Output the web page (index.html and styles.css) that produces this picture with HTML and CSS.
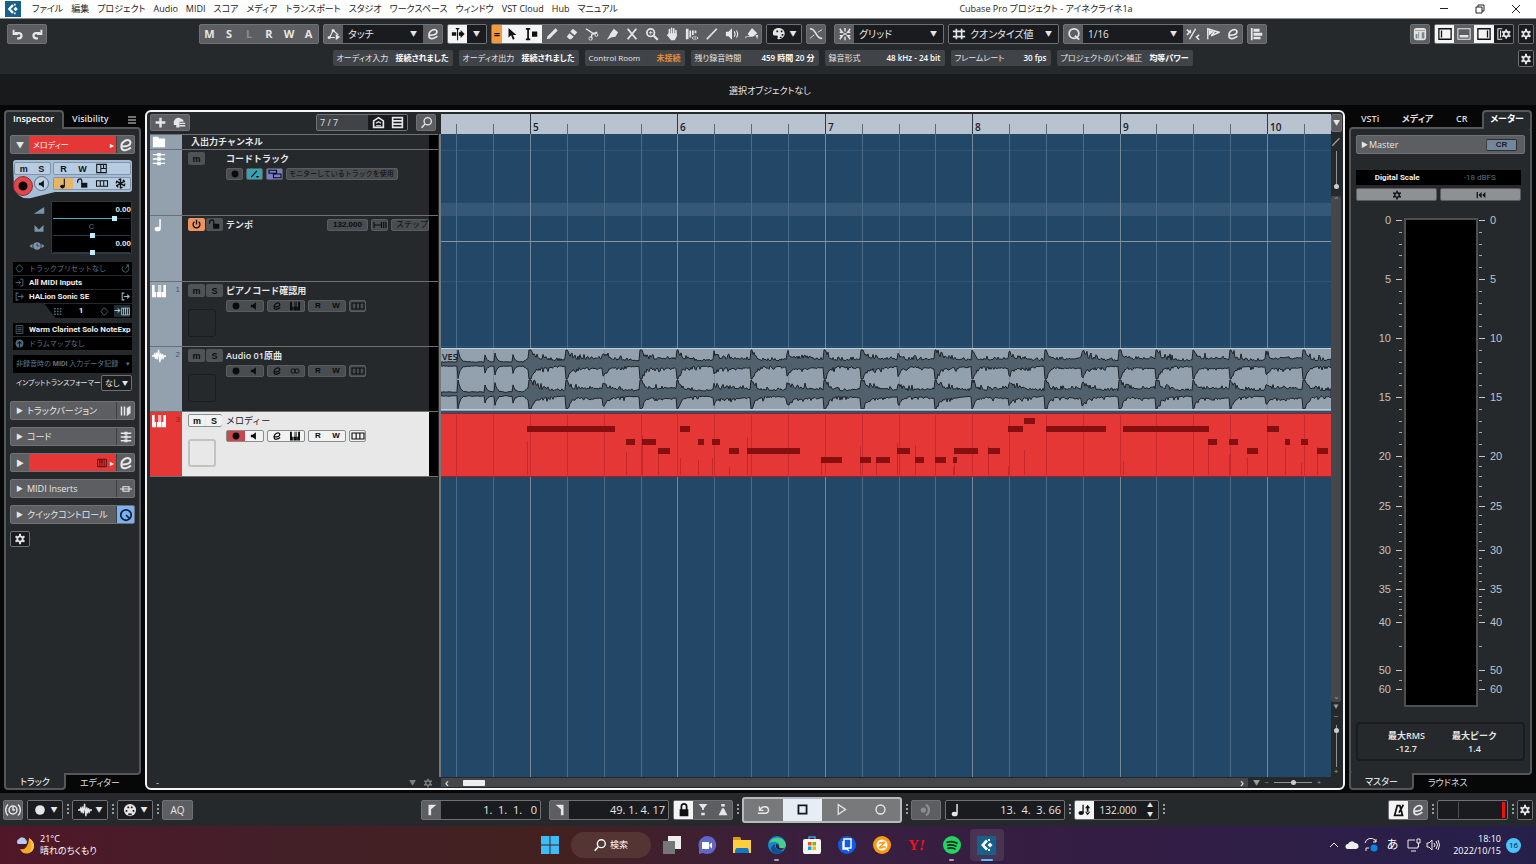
FILE: index.html
```html
<!DOCTYPE html>
<html lang="ja">
<head>
<meta charset="utf-8">
<title>Cubase Pro プロジェクト - アイネクライネ1a</title>
<link rel="stylesheet" href="styles.css">
</head>
<body>
<svg class="sprite" aria-hidden="true">
  <symbol id="undo" viewBox="0 0 16 16"><path d="M3 3v5h5" fill="none" stroke="currentColor" stroke-width="2.200"/><path d="M4 7h5a3 3 0 0 1 0 6H7" fill="none" stroke="currentColor" stroke-width="2.600"/></symbol>
  <symbol id="redo" viewBox="0 0 16 16"><path d="M13 3v5H8" fill="none" stroke="currentColor" stroke-width="2.200"/><path d="M12 7H7a3 3 0 0 0 0 6h2" fill="none" stroke="currentColor" stroke-width="2.600"/></symbol>
  <symbol id="e" viewBox="0 0 16 16"><path d="M4 9.500C8 9.500 12.500 8.500 12.500 5.500 12.500 3 9.500 2.500 7.500 3.500 4.500 5 2.800 8 3.500 11c.8 3.500 6 2.500 9.500-.5" fill="none" stroke="currentColor" stroke-width="2"/></symbol>
  <symbol id="gear" viewBox="0 0 16 16"><circle cx="8" cy="8" r="3.600" fill="none" stroke="currentColor" stroke-width="2.400"/><path d="M8 1v3M8 12v3M2 4.500l2.500 1.500M11.500 10l2.500 1.500M2 11.500L4.500 10M11.500 6L14 4.500" stroke="currentColor" stroke-width="2.600"/></symbol>
  <symbol id="auto" viewBox="0 0 16 16"><path d="M3 12L7 4l6 5M2 12h7" fill="none" stroke="currentColor" stroke-width="1.300"/><path d="M10 8v7l5-3.500z" fill="currentColor"/><circle cx="7" cy="4" r="1.800" fill="currentColor"/><circle cx="2.500" cy="12" r="1.800" fill="currentColor"/></symbol>
  <symbol id="scroll" viewBox="0 0 16 16"><path d="M1 6h5v4H1zM9 6h2V3.500L15.500 8 11 12.500V10H9zM5 1h5L7.500 4z" fill="currentColor"/><path d="M7.500 2v13" stroke="currentColor" stroke-width="1.200"/></symbol>
  <symbol id="arrow" viewBox="0 0 16 16"><path d="M4 1v11l3-2.500 2 5 2-1-2-4.500h4z" fill="currentColor"/></symbol>
  <symbol id="range" viewBox="0 0 16 16"><path d="M1 2h5M1 14h5M3.500 2v12" stroke="currentColor" stroke-width="2"/><path d="M8 5h6v6H8z" fill="currentColor"/></symbol>
  <symbol id="pencil" viewBox="0 0 16 16"><path d="M2 14l1-3.500L12 1.500l2.500 2.500-9 9z" fill="currentColor"/></symbol>
  <symbol id="eraser" viewBox="0 0 16 16"><path d="M9 2l5 4-3 3.500L6 5.500zM5 7l5 4-3 3H5L2 11z" fill="currentColor"/></symbol>
  <symbol id="scissors" viewBox="0 0 16 16"><path d="M1 2l10 6.500M8 8l-1 5" stroke="currentColor" stroke-width="1.600"/><path d="M8 8l6-2" stroke="currentColor" stroke-width="2"/><circle cx="13" cy="9" r="1.700" fill="none" stroke="currentColor"/><circle cx="6.500" cy="13" r="2" fill="none" stroke="currentColor"/></symbol>
  <symbol id="glue" viewBox="0 0 16 16"><path d="M10 2l5 4-3 5-6 1-1-3zM5 10l2 2-5 2.500z" fill="currentColor"/></symbol>
  <symbol id="x" viewBox="0 0 16 16"><path d="M3 2l10 12M13 2L3 14" stroke="currentColor" stroke-width="2.200"/></symbol>
  <symbol id="zoom" viewBox="0 0 16 16"><circle cx="6.500" cy="6.500" r="4.300" fill="none" stroke="currentColor" stroke-width="2"/><path d="M10 10l4.500 4.500" stroke="currentColor" stroke-width="2.600"/><path d="M4.500 6.500h4M6.500 4.500v4" stroke="currentColor"/></symbol>
  <symbol id="hand" viewBox="0 0 16 16"><path d="M5 9V3M7.500 8V1.500M10 8V2M12.500 9V4" stroke="currentColor" stroke-width="1.800" stroke-linecap="round"/><path d="M4 7h9.400v4L11 15H7L2 9l1.500-1z" fill="currentColor"/></symbol>
  <symbol id="comp" viewBox="0 0 16 16"><path d="M1 2h3v12H1zM5 4h2v8H5zM8 4h2v5H8zM11 4h2v3h-2z" fill="currentColor"/><path d="M10 11l-2 1.500 2 1.500M13 11l2 1.500-2 1.500M11.500 10v5" fill="none" stroke="currentColor"/></symbol>
  <symbol id="line" viewBox="0 0 16 16"><path d="M2 14L13.500 2" stroke="currentColor" stroke-width="2"/></symbol>
  <symbol id="autoline" viewBox="0 0 16 16"><path d="M2 13L11 3" stroke="currentColor" stroke-width="2"/><path d="M9 11h6l-3 3.500z" fill="currentColor"/></symbol>
  <symbol id="speaker" viewBox="0 0 16 16"><path d="M1 5.500h3l4-4v13l-4-4H1z" fill="currentColor"/><path d="M10.500 5q2 3 0 6M13 4q3 4 0 8" fill="none" stroke="currentColor" stroke-width="1.300"/></symbol>
  <symbol id="bucket" viewBox="0 0 16 16"><path d="M8 1l6 6-5 4H2L1 13l-1-2 5-1-2-2zM12 9h3l-1 5z" fill="currentColor"/></symbol>
  <symbol id="palette" viewBox="0 0 16 16"><path fill-rule="evenodd" d="M8 1a7 6.500 0 1 1-1 13c-2-1 1-3-1-4s-5 1-5-3 3-6 7-6zm-3 3v2h2V4zm5 0v2h2V4zm1 4v2h2V8zm-2 3v1.500h2V11z" fill="currentColor"/></symbol>
  <symbol id="cross" viewBox="0 0 16 16"><path d="M1 2c8 0 6 11 14 11" fill="none" stroke="currentColor" stroke-width="1.800"/><path d="M1 13l5-4M10 6l5-3" stroke="currentColor"/></symbol>
  <symbol id="snap" viewBox="0 0 16 16"><path d="M8 1v4M8 11v4M6 8h4M2 2l3 4-3 0M14 2l-3 4h3M2 14l3-4H2M14 14l-3-4h3" fill="none" stroke="currentColor" stroke-width="1.600"/></symbol>
  <symbol id="hash" viewBox="0 0 16 16"><path d="M5 2v12M11 2v12M1 5h14M1 11h14" stroke="currentColor" stroke-width="1.900"/></symbol>
  <symbol id="q" viewBox="0 0 16 16"><circle cx="8" cy="7.500" r="5.500" fill="none" stroke="currentColor" stroke-width="2"/><path d="M9 10l5 4.500" stroke="currentColor" stroke-width="2"/></symbol>
  <symbol id="swing" viewBox="0 0 16 16"><path d="M4 14l7-12M1 3l3 3-3 3M15 9l-3 2.500 3 3M5 3v4" fill="none" stroke="currentColor" stroke-width="1.700"/></symbol>
  <symbol id="flag" viewBox="0 0 16 16"><path d="M2 14V2l13 4-9 4 4-5" fill="none" stroke="currentColor" stroke-width="1.600"/><path d="M3 3l6 2-6 5z" fill="currentColor"/></symbol>
  <symbol id="align" viewBox="0 0 16 16"><path d="M1 1h2v14H1zM4 2h7v3.500H4zM4 6.500h10V10H4zM4 11h8v3H4z" fill="currentColor"/></symbol>
  <symbol id="mixer" viewBox="0 0 16 16"><rect x="1" y="1" width="14" height="14" rx="3" fill="#e4e2df"/><path d="M3 8h2v5H3zM6 6h1v7H6zM10 6h3v7h-3z" fill="#788797"/><path d="M2 4h12" stroke="#9d9b94"/></symbol>
  <symbol id="winleft" viewBox="0 0 16 16"><path d="M1 2h14v12H1zM4 4v8" fill="none" stroke="currentColor" stroke-width="1.500"/></symbol>
  <symbol id="winlow" viewBox="0 0 16 16"><path d="M1 2h14v12H1z" fill="none" stroke="currentColor" stroke-width="1.200"/><path d="M3 9h10v3H3z" fill="currentColor"/></symbol>
  <symbol id="winright" viewBox="0 0 16 16"><path d="M1 2h14v12H1zM12 4v8" fill="none" stroke="currentColor" stroke-width="1.500"/></symbol>
  <symbol id="wingear" viewBox="0 0 16 16"><path d="M6 2H1v12h5M4 4v8" fill="none" stroke="currentColor" stroke-width="1.200"/><circle cx="10.500" cy="8" r="2.800" fill="none" stroke="currentColor" stroke-width="2.200"/><path d="M10.500 2.500v11M5.700 5.200l9.600 5.600M5.700 10.800l9.600-5.600" stroke="currentColor" stroke-width="1.800"/><circle cx="10.500" cy="8" r="1.800" fill="#191b1e"/></symbol>
  <symbol id="keys" viewBox="0 0 16 16"><path d="M0 1h3v8h1.500v6H0zM5.500 1h1v8H11V9H9.500V1h1v8H11v6H5.500V9H6.500V1zM13 1h3v14h-4.500V9H13z" fill="currentColor"/><path d="M7.300 1h1.400v9H7.300z" fill="currentColor"/></symbol>
  <symbol id="keysbox" viewBox="0 0 16 16"><path d="M1 2h14v12H1zM4.500 2v12M8 2v12M11.500 2v12M4.500 2v6M8 2v6" fill="none" stroke="currentColor" stroke-width="1.500"/></symbol>
  <symbol id="lanes" viewBox="0 0 18 16"><path d="M1 4h16v8H1zM6.500 4v8M11.500 4v8" fill="none" stroke="currentColor" stroke-width="1.500"/></symbol>
  <symbol id="wave" viewBox="0 0 16 16"><path d="M0 8h2l1-2 1 5 1-7 1 8L7.500 1 9 15l1-10 1 7 1-6 1 4 1-2h2" fill="none" stroke="currentColor" stroke-width="1.500"/></symbol>
  <symbol id="chord" viewBox="0 0 16 16"><path d="M1 3h14M1 8h14M1 13h14" stroke="currentColor" stroke-width="1.700"/><path d="M6 1h4v4H6zM6 6h4v4H6zM6 11h4v4H6z" fill="currentColor"/></symbol>
  <symbol id="note" viewBox="0 0 16 16"><ellipse cx="6.500" cy="12.500" rx="3.400" ry="2.600" fill="currentColor"/><path d="M9.200 1v11" stroke="currentColor" stroke-width="1.700"/></symbol>
  <symbol id="folder" viewBox="0 0 16 16"><path d="M1 2h6l1 2h7v10H1z" fill="currentColor"/></symbol>
  <symbol id="lock" viewBox="0 0 16 16"><path d="M3 7h10v8H3z" fill="currentColor"/><path d="M5 8V4a3 3 0 0 1 6 0v4" fill="none" stroke="currentColor" stroke-width="2"/></symbol>
  <symbol id="unlock" viewBox="0 0 16 16"><path d="M6 7h9v7H6z" fill="currentColor"/><path d="M1 7V5a3 3 0 0 1 6-1v4" fill="none" stroke="currentColor" stroke-width="1.800"/></symbol>
  <symbol id="power" viewBox="0 0 16 16"><path d="M5 4a5 5 0 1 0 6 0M8 1v7" fill="none" stroke="currentColor" stroke-width="1.900"/></symbol>
  <symbol id="dot" viewBox="0 0 16 16"><circle cx="8" cy="8" r="5.500" fill="currentColor"/></symbol>
  <symbol id="mon" viewBox="0 0 16 16"><path d="M3 6h3l5-4v12l-5-4H3z" fill="currentColor"/></symbol>
  <symbol id="stereo" viewBox="0 0 16 16"><circle cx="5" cy="8" r="3.500" fill="none" stroke="currentColor" stroke-width="1.500"/><circle cx="11" cy="8" r="3.500" fill="none" stroke="currentColor" stroke-width="1.500"/></symbol>
  <symbol id="lane-grid" viewBox="0 0 16 16"><path d="M1 2h14v12H1zM7 2v12M7 8h8M11 2v6" fill="none" stroke="currentColor" stroke-width="1.500"/></symbol>
  <symbol id="flake" viewBox="0 0 16 16"><path d="M8 1v14M2 4.500l12 7M2 11.500l12-7" stroke="currentColor" stroke-width="2"/><circle cx="8" cy="8" r="6.300" fill="none" stroke="currentColor" stroke-width="1.800" stroke-dasharray="4 2.500"/></symbol>
  <symbol id="diamond" viewBox="0 0 16 16"><path d="M6 2L2 8l4 6M9 2l5 6-5 6M6 2h3M6 14h3" fill="none" stroke="currentColor" stroke-width="1.500"/></symbol>
  <symbol id="reload" viewBox="0 0 16 16"><path d="M4 4a6 6 0 1 0 8 0M8 8l4-5" fill="none" stroke="currentColor" stroke-width="1.600"/><path d="M9 1h5v5z" fill="currentColor"/></symbol>
  <symbol id="in" viewBox="0 0 16 16"><path d="M1 8h8M6 4.500L9.500 8 6 11.500M9 2h5v12H9" fill="none" stroke="currentColor" stroke-width="1.600"/></symbol>
  <symbol id="out" viewBox="0 0 16 16"><path d="M6 2H2v12h4M5 8h9M11 4.500L14.500 8 11 11.500" fill="none" stroke="currentColor" stroke-width="1.800"/></symbol>
  <symbol id="dots9" viewBox="0 0 16 16"><path d="M2 3h3M7 3h3M12 3h3M2 8h3M7 8h3M12 8h3M2 13h3M7 13h3M12 13h3" stroke="currentColor" stroke-width="2.500"/></symbol>
  <symbol id="page" viewBox="0 0 16 16"><path d="M2 1h12v14H2zM4 5h8M4 8h8M4 11h8" fill="none" stroke="currentColor" stroke-width="1.500"/></symbol>
  <symbol id="drum" viewBox="0 0 16 16"><circle cx="8" cy="8" r="7" fill="currentColor"/><path d="M5 9q0-4 3-4t3 4M8 5v9" fill="none" stroke="#000" stroke-width="1.500"/></symbol>
  <symbol id="vol" viewBox="0 0 16 16"><path d="M1 13L15 4v9z" fill="currentColor"/></symbol>
  <symbol id="pan" viewBox="0 0 16 16"><path d="M2 4l6 6 6-6v9H2z" fill="currentColor"/></symbol>
  <symbol id="delay" viewBox="0 0 20 16"><path d="M4 5v6L0 8zM16 5v6l4-3z" fill="currentColor"/><circle cx="10" cy="8" r="5" fill="currentColor"/><path d="M10 5v3h3" stroke="#25292c" fill="none"/></symbol>
  <symbol id="versions" viewBox="0 0 16 16"><path d="M1 2h2v12H1zM5 2h2v12H5zM9 4l5-3v10l-5 4z" fill="currentColor"/></symbol>
  <symbol id="insert" viewBox="0 0 16 16"><path d="M0 8h16M4 5h8v6H4z" fill="none" stroke="currentColor" stroke-width="1.600"/></symbol>
  <symbol id="knob" viewBox="0 0 16 16"><circle cx="8" cy="8" r="6" fill="none" stroke="currentColor" stroke-width="2"/><path d="M8 8l4 4" stroke="currentColor" stroke-width="2"/></symbol>
  <symbol id="plus" viewBox="0 0 16 16"><path d="M8 2v12M2 8h12" stroke="currentColor" stroke-width="3"/></symbol>
  <symbol id="preset" viewBox="0 0 16 16"><path d="M2 5a5 4 0 0 1 9-1q2 0 2 3H8v7H4V11H1V6z" fill="currentColor"/><path d="M8 9h7M8 12h7" stroke="currentColor" stroke-width="1.600"/></symbol>
  <symbol id="house" viewBox="0 0 16 16"><path d="M2 6l6-4 6 4v8H2z" fill="none" stroke="currentColor" stroke-width="2"/><path d="M5 9l3-2 3 2M5 12h6" fill="none" stroke="currentColor" stroke-width="1.500"/></symbol>
  <symbol id="list" viewBox="0 0 16 16"><path d="M2 2h12v12H2zM2 6h12M2 10h12" fill="none" stroke="currentColor" stroke-width="2"/></symbol>
  <symbol id="search" viewBox="0 0 16 16"><circle cx="9.500" cy="6.500" r="4.500" fill="none" stroke="currentColor" stroke-width="1.600"/><path d="M6 10l-4 4.500" stroke="currentColor" stroke-width="1.800"/></symbol>
  <symbol id="rewind" viewBox="0 0 16 16"><path d="M1 3h2v10H1zM9 3v10L4 8zM15 3v10l-5-5z" fill="currentColor"/></symbol>
  <symbol id="loc-l" viewBox="0 0 16 16"><path d="M4 2h9L7 7v7H4z" fill="currentColor"/></symbol>
  <symbol id="loc-r" viewBox="0 0 16 16"><path d="M12 2H3l6 5v7h3z" fill="currentColor"/></symbol>
  <symbol id="punchin" viewBox="0 0 16 16"><path d="M3 1h10L9 6v2H7V6zM6 11h4v3H6z" fill="currentColor"/></symbol>
  <symbol id="punchout" viewBox="0 0 16 16"><path d="M6 1h4v3H6zM7 6h2l4 8H3z" fill="currentColor"/></symbol>
  <symbol id="cycle" viewBox="0 0 16 16"><path d="M1 12.500h9c6 0 5-8 0-8-3 0-5 1-6.500 4" fill="none" stroke="currentColor" stroke-width="1.800"/><path d="M3 4v5h5" fill="none" stroke="currentColor" stroke-width="1.600"/></symbol>
  <symbol id="stop" viewBox="0 0 16 16"><path d="M3 3h10v10H3z" fill="none" stroke="currentColor" stroke-width="2.200"/></symbol>
  <symbol id="play" viewBox="0 0 16 16"><path d="M4 2l9 6-9 6z" fill="none" stroke="currentColor" stroke-width="1.600"/></symbol>
  <symbol id="rec" viewBox="0 0 16 16"><circle cx="8" cy="8" r="5.500" fill="none" stroke="currentColor" stroke-width="1.700"/></symbol>
  <symbol id="clock" viewBox="0 0 16 16"><circle cx="8" cy="8" r="4" fill="none" stroke="currentColor" stroke-width="1.500"/><path d="M8 5v3h2M3 2.500a7.500 7.500 0 0 0 0 11M13 2.500a7.500 7.500 0 0 1 0 11" fill="none" stroke="currentColor" stroke-width="1.400"/></symbol>
  <symbol id="midi" viewBox="0 0 16 16"><circle cx="8" cy="8" r="7" fill="currentColor"/><path d="M3 9h2M5 5h2M9 5h2M11 9h2M6 13h4" stroke="#191b1e" stroke-width="2"/></symbol>
  <symbol id="sound" viewBox="0 0 16 16"><circle cx="5" cy="8" r="3" fill="currentColor"/><path d="M8 2a7 7 0 0 1 0 12" fill="none" stroke="currentColor" stroke-width="2.500"/></symbol>
  <symbol id="metro" viewBox="0 0 16 16"><path d="M6 3h3l3 11H3zM8 11l5-9" fill="none" stroke="currentColor" stroke-width="2"/></symbol>
  <symbol id="tempo" viewBox="0 0 16 16"><ellipse cx="3.500" cy="11.500" rx="3" ry="2.300" fill="currentColor"/><path d="M5.800 2v10" stroke="currentColor" stroke-width="1.500"/><path d="M8 6l3-4 3 4zM8 10l3 4 3-4zM10 5h2v6h-2z" fill="currentColor"/></symbol>
  <symbol id="cubase" viewBox="0 0 16 16"><path d="M7 2.500l2 2L5.500 8 9 11.500l-2 2L2 8zM11 5.500L13.500 8 11 10.500 8.500 8zM9 2h2v2H9zM9 12h2v2H9z" fill="#fff"/></symbol>
</svg>

<header class="menubar">
  <span class="logo"><svg class="i14"><use href="#cubase"/></svg></span>
  <nav class="menus">
    <button>ファイル</button><button>編集</button><button>プロジェクト</button><button>Audio</button><button>MIDI</button><button>スコア</button><button>メディア</button><button>トランスポート</button><button>スタジオ</button><button>ワークスペース</button><button>ウィンドウ</button><button>VST Cloud</button><button>Hub</button><button>マニュアル</button>
  </nav>
  <h1 class="title">Cubase Pro プロジェクト - アイネクライネ1a</h1>
  <div class="winbtns">
    <button aria-label="最小化"><svg viewBox="0 0 12 12"><path d="M2 5.500h8"/></svg></button>
    <button aria-label="元に戻す"><svg viewBox="0 0 12 12"><path d="M2 4h6v6H2zM4 4V2h6v6H8"/></svg></button>
    <button aria-label="閉じる"><svg viewBox="0 0 12 12"><path d="M2 2l8 8M10 2l-8 8"/></svg></button>
  </div>
</header>

<section class="topbar">
  <div class="tools">
    <div class="grp"><button aria-label="元に戻す"><svg><use href="#undo"/></svg></button><button aria-label="やり直し"><svg><use href="#redo"/></svg></button></div>
    <div class="tools-mid">
      <div class="grp letters"><button>M</button><button>S</button><button class="dim">L</button><button>R</button><button>W</button><button>A</button></div>
      <div class="grp"><button aria-label="オートメーション"><svg><use href="#auto"/></svg></button><span class="sel w80"><select aria-label="モード"><option>タッチ</option></select></span><button aria-label="設定"><svg><use href="#e"/></svg></button></div>
      <div class="grp"><button class="on" aria-label="オートスクロール"><svg><use href="#scroll"/></svg></button><button class="dark">▼</button></div>
      <div class="grp palette"><button class="grip" aria-label="ツール">=</button><button class="on" aria-label="選択"><svg><use href="#arrow"/></svg></button><button class="on" aria-label="範囲"><svg><use href="#range"/></svg></button><button aria-label="鉛筆"><svg><use href="#pencil"/></svg></button><button aria-label="消しゴム"><svg><use href="#eraser"/></svg></button><button aria-label="はさみ"><svg><use href="#scissors"/></svg></button><button aria-label="のり"><svg><use href="#glue"/></svg></button><button aria-label="ミュート"><svg><use href="#x"/></svg></button><button aria-label="ズーム"><svg><use href="#zoom"/></svg></button><button aria-label="手"><svg><use href="#hand"/></svg></button><button aria-label="コンプ"><svg><use href="#comp"/></svg></button><button aria-label="ライン"><svg><use href="#line"/></svg></button><button aria-label="再生"><svg><use href="#speaker"/></svg></button><button aria-label="カラー"><svg><use href="#bucket"/></svg></button></div>
      <div class="grp w36"><button class="dark" aria-label="パレット"><svg><use href="#palette"/></svg>▼</button></div>
      <div class="grp"><button aria-label="クロスフェード"><svg><use href="#cross"/></svg></button></div>
      <div class="grp gap-l"><button aria-label="スナップ"><svg><use href="#snap"/></svg></button><span class="sel w88"><select aria-label="スナップタイプ"><option>グリッド</option></select></span></div>
      <div class="grp hashed"><span class="pre"><svg><use href="#hash"/></svg></span><span class="sel w88"><select aria-label="グリッドタイプ"><option>クオンタイズ値</option></select></span></div>
      <div class="grp"><button aria-label="クオンタイズ"><svg><use href="#q"/></svg></button><span class="sel w100"><select aria-label="プリセット"><option>1/16</option></select></span><button aria-label="スウィング"><svg><use href="#swing"/></svg></button><button aria-label="フラグ"><svg><use href="#flag"/></svg></button><button aria-label="クオンタイズ設定"><svg><use href="#e"/></svg></button></div>
      <div class="grp"><button aria-label="整列"><svg><use href="#align"/></svg></button></div>
    </div>
    <div class="tools-end">
      <div class="grp"><button aria-label="ミキサー"><svg><use href="#mixer"/></svg></button></div>
      <div class="grp"><button class="on" aria-label="左ゾーン"><svg><use href="#winleft"/></svg></button><button aria-label="下ゾーン"><svg><use href="#winlow"/></svg></button><button class="on" aria-label="右ゾーン"><svg><use href="#winright"/></svg></button><button class="dark" aria-label="ゾーン設定"><svg><use href="#wingear"/></svg></button></div>
      <div class="grp slim"><button class="dark" aria-label="設定"><svg><use href="#gear"/></svg></button></div>
    </div>
  </div>
  <div class="status">
    <div class="chips">
      <div class="chip c120"><span>オーディオ入力</span><b>接続されました</b></div>
      <div class="chip c120"><span>オーディオ出力</span><b>接続されました</b></div>
      <div class="chip c100"><span>Control Room</span><b class="warn">未接続</b></div>
      <div class="chip c128"><span>残り録音時間</span><b>459 時間 20 分</b></div>
      <div class="chip c120"><span>録音形式</span><b>48 kHz - 24 bit</b></div>
      <div class="chip c100"><span>フレームレート</span><b>30 fps</b></div>
      <div class="chip c136"><span>プロジェクトのパン補正</span><b>均等パワー</b></div>
    </div>
    <div class="grp slim"><button class="dark" aria-label="設定"><svg><use href="#gear"/></svg></button></div>
  </div>
</section>
<div class="infoline">選択オブジェクトなし</div>

<main class="zones">
  <aside class="panel inspector">
    <div class="tabs"><button class="tab active">Inspector</button><button class="tab">Visibility</button><button class="tab end" aria-label="メニュー"><svg class="i10" viewBox="0 0 10 10"><path d="M1 2h8M1 5h8M1 8h8" stroke="currentColor"/></svg></button></div>
    <div class="panel-body">
      <div class="bar melody"><button class="tri">▼</button><span class="name red">メロディー<i>▸</i></span><button aria-label="編集"><svg class="i16"><use href="#e"/></svg></button></div>
      <div class="strip">
        <svg class="strip-bg" viewBox="0 0 119 40" preserveAspectRatio="none"><path d="M3 0H116q3 0 3 3V29q0 3-3 3H42L18 38Q4 40 1 27L0 3Q0 0 3 0z" fill="#a6bdd6"/></svg>
        <div class="cell ms"><button>m</button><button>S</button></div>
        <div class="cell rw"><button>R</button><button>W</button><button aria-label="レーン"><svg><use href="#lane-grid"/></svg></button><button aria-hidden="true" tabindex="-1"></button></div>
        <div class="rounds"><button class="recbtn" aria-label="録音"></button><button class="monbtn" aria-label="モニター"><svg><use href="#mon"/></svg></button></div>
        <div class="cell four"><button class="amber" aria-label="タイムベース"><svg><use href="#note"/></svg></button><button aria-label="ロック"><svg><use href="#unlock"/></svg></button><button aria-label="レーン表示"><svg class="wide"><use href="#lanes"/></svg></button><button aria-label="フリーズ"><svg><use href="#flake"/></svg></button></div>
      </div>
      <div class="levels">
        <div class="lv-icons"><svg><use href="#vol"/></svg><svg><use href="#pan"/></svg><svg class="wide"><use href="#delay"/></svg></div>
        <div class="lv-box">
          <div class="lv"><b>0.00</b><span class="rail full"><i></i></span></div>
          <div class="lv mid"><b>C</b><span class="rail"><i></i></span></div>
          <div class="lv"><b>0.00</b><span class="rail"><i></i></span></div>
        </div>
      </div>
      <div class="rows">
        <div class="row dimrow"><svg><use href="#diamond"/></svg><span>トラックプリセットなし</span><svg><use href="#reload"/></svg></div>
        <div class="row"><svg><use href="#in"/></svg><b>All MIDI Inputs</b></div>
        <div class="row"><svg><use href="#out"/></svg><b>HALion Sonic SE</b><svg class="lit"><use href="#out"/></svg></div>
        <div class="row notch"><svg><use href="#dots9"/></svg><b>1</b><svg><use href="#diamond"/></svg><span class="keybtn">➔<svg><use href="#keysbox"/></svg></span></div>
      </div>
      <div class="rows">
        <div class="row"><svg><use href="#page"/></svg><b class="prog">Warm Clarinet Solo NoteExp</b></div>
        <div class="row dimrow"><svg><use href="#drum"/></svg><span>ドラムマップなし</span></div>
      </div>
      <div class="retro"><span>非録音時の <b>MIDI</b> 入力データ記録</span><i>▾</i></div>
      <label class="transformer">インプットトランスフォーマー<span class="sel small"><select><option>なし</option></select></span></label>
      <div class="sections">
        <div class="bar"><button class="sec"><i>▶</i>トラックバージョン</button><button aria-label="バージョン"><svg><use href="#versions"/></svg></button></div>
        <div class="bar"><button class="sec"><i>▶</i>コード</button><button aria-label="コード"><svg><use href="#chord"/></svg></button></div>
        <div class="bar"><button class="tri">▶</button><span class="name red right"><svg><use href="#keysbox"/></svg><i>▸</i></span><button aria-label="編集"><svg class="i16"><use href="#e"/></svg></button></div>
        <div class="bar"><button class="sec"><i>▶</i>MIDI Inserts</button><button aria-label="インサート"><svg><use href="#insert"/></svg></button></div>
        <div class="bar"><button class="sec"><i>▶</i>クイックコントロール</button><button class="blue" aria-label="クイックコントロール"><svg class="i14"><use href="#knob"/></svg></button></div>
      </div>
      <button class="gearbtn" aria-label="設定"><svg><use href="#gear"/></svg></button>
    </div>
    <div class="tabs foot"><button class="tab active">トラック</button><button class="tab">エディター</button></div>
  </aside>

  <section class="project">
    <div class="list-head">
      <div class="grp low"><button aria-label="追加"><svg><use href="#plus"/></svg></button><button aria-label="プリセットから追加"><svg><use href="#preset"/></svg></button></div>
      <div class="grp low count"><span>7 / 7</span><button class="dark" aria-label="表示"><svg><use href="#house"/></svg></button><button class="dark" aria-label="一覧"><svg><use href="#list"/></svg></button></div>
      <div class="grp low"><button aria-label="検索"><svg><use href="#search"/></svg></button></div>
    </div>
    <svg class="ruler" id="ruler" role="img" aria-label="ルーラー"></svg>
    <button class="ruler-menu">▼</button>

    <div class="tracks">
      <article class="track folder"><div class="tcol"><svg class="i14"><use href="#folder"/></svg></div><div class="tmain"><h2>入出力チャンネル</h2></div><div class="tmeter"></div></article>
      <article class="track tall"><div class="tcol"><svg class="i14"><use href="#chord"/></svg></div>
        <div class="tmain"><div class="pair"><button>m</button></div><div class="tinfo"><h2>コードトラック</h2><div class="ctl"><span class="pill"><button aria-label="録音"><svg><use href="#dot"/></svg></button></span><span class="pill teal"><button aria-label="自動"><svg><use href="#autoline"/></svg></button></span><span class="pill violet"><button aria-label="ボイシング"><svg class="wide" viewBox="0 0 18 16"><path d="M1 3h10v4H1zM7 8h10v5H7z" fill="none" stroke="currentColor" stroke-width="1.500"/></svg></button></span><span class="pill txt">モニターしているトラックを使用</span></div></div></div><div class="tmeter"></div></article>
      <article class="track tall"><div class="tcol"><svg class="i14"><use href="#note"/></svg></div>
        <div class="tmain"><div class="pair"><button class="peach" aria-label="有効"><svg><use href="#power"/></svg></button><button aria-label="ロック"><svg><use href="#unlock"/></svg></button></div><div class="tinfo"><h2>テンポ</h2></div><div class="tempo"><span class="pill val">132.000</span><span class="pill"><button aria-label="トラック幅"><svg class="wide" viewBox="0 0 18 16"><path d="M1 4v8M1 8h10M11 4v8M14 4v8M17 4v8" stroke="currentColor" stroke-width="1.500"/></svg></button></span><span class="pill step">ステップ</span></div></div><div class="tmeter"></div></article>
      <article class="track"><div class="tcol"><svg class="i14"><use href="#keys"/></svg><span>1</span></div>
        <div class="tmain"><div class="side"><div class="pair"><button>m</button><button>S</button></div><div class="thumb"></div></div><div class="tinfo"><h2>ピアノコード確認用</h2><div class="ctl"><span class="pill"><button aria-label="録音"><svg><use href="#dot"/></svg></button><button aria-label="モニター"><svg><use href="#mon"/></svg></button></span><span class="pill"><button aria-label="編集"><svg><use href="#e"/></svg></button><button aria-label="音源"><svg><use href="#keys"/></svg></button></span><span class="pill"><button>R</button><button>W</button></span><span class="pill"><button aria-label="レーン"><svg class="wide"><use href="#lanes"/></svg></button></span></div></div></div><div class="tmeter"></div></article>
      <article class="track"><div class="tcol"><svg class="i14"><use href="#wave"/></svg><span>2</span></div>
        <div class="tmain"><div class="side"><div class="pair"><button>m</button><button>S</button></div><div class="thumb"></div></div><div class="tinfo"><h2>Audio 01原曲</h2><div class="ctl"><span class="pill"><button aria-label="録音"><svg><use href="#dot"/></svg></button><button aria-label="モニター"><svg><use href="#mon"/></svg></button></span><span class="pill"><button aria-label="編集"><svg><use href="#e"/></svg></button><button aria-label="ステレオ"><svg><use href="#stereo"/></svg></button></span><span class="pill"><button>R</button><button>W</button></span><span class="pill"><button aria-label="レーン"><svg class="wide"><use href="#lanes"/></svg></button></span></div></div></div><div class="tmeter"></div></article>
      <article class="track selected"><div class="tcol"><svg class="i14"><use href="#keys"/></svg><span>3</span></div>
        <div class="tmain"><div class="side"><div class="pair"><button>m</button><button>S</button></div><div class="thumb"></div></div><div class="tinfo"><h2>メロディー</h2><div class="ctl"><span class="pill"><button class="armed" aria-label="録音"><svg><use href="#dot"/></svg></button><button aria-label="モニター"><svg><use href="#mon"/></svg></button></span><span class="pill"><button aria-label="編集"><svg><use href="#e"/></svg></button><button aria-label="音源"><svg><use href="#keys"/></svg></button></span><span class="pill"><button>R</button><button>W</button></span><span class="pill"><button aria-label="レーン"><svg class="wide"><use href="#lanes"/></svg></button></span></div></div></div><div class="tmeter"></div></article>
    </div>
    <div class="canvas"><svg id="arrange" role="img" aria-label="イベントディスプレイ"></svg></div>
    <div class="vside">
      <svg class="i10"><use href="#line"/></svg>
      <div class="vslider"><i></i></div>
      <div class="vscroll"><span>⌃</span><span>⌄</span></div>
      <span class="vsign">▼</span><span class="vsign">−</span>
      <div class="vslider short"><i></i></div><span class="vsign">+</span>
    </div>

    <div class="list-foot"><span>-</span><span class="grow"></span><span>▼</span><svg class="i10"><use href="#gear"/></svg></div>
    <div class="hscroll"><div class="track-h"><span>‹</span><i></i><span class="r">›</span></div><span>▼</span><span>−</span><div class="hslider"><i></i></div><span>+</span></div>
    <div></div>
  </section>

  <aside class="panel rack">
    <div class="tabs"><button class="tab">VSTi</button><button class="tab">メディア</button><button class="tab">CR</button><button class="tab active">メーター</button></div>
    <div class="panel-body">
      <div class="bar master"><button class="sec"><i>▶</i>Master</button><button class="crbtn">CR</button></div>
      <div class="scale-row"><b>Digital Scale</b><span>-18 dBFS</span></div>
      <div class="two"><button aria-label="設定"><svg><use href="#gear"/></svg></button><button aria-label="リセット"><svg><use href="#rewind"/></svg></button></div>
      <svg class="meter" id="meter" viewBox="0 0 170 500" role="img" aria-label="レベルメーター"></svg>
      <div class="peaks"><div><b>最大RMS</b><b>-12.7</b></div><div><b>最大ピーク</b><b>1.4</b></div></div>
    </div>
    <div class="tabs foot"><button class="tab active">マスター</button><button class="tab">ラウドネス</button></div>
  </aside>
</main>

<footer class="transport">
  <div class="tgroup">
    <div class="grp"><button aria-label="オーディオ性能"><svg class="i16"><use href="#clock"/></svg></button></div>
    <div class="grp w36 sp4"><button class="dark" aria-label="録音モード"><svg><use href="#dot"/></svg>▼</button></div><span class="dots"></span>
    <div class="grp w36"><button class="dark" aria-label="オーディオ録音"><svg><use href="#wave"/></svg>▼</button></div><span class="dots"></span>
    <div class="grp w36"><button class="dark" aria-label="MIDI録音"><svg><use href="#midi"/></svg>▼</button></div><span class="dots"></span>
    <div class="grp aq"><button>AQ</button></div>
  </div>
  <div class="tgroup center">
    <div class="grp loc"><button aria-label="左ロケーター"><svg><use href="#loc-l"/></svg></button><output>1.  1.  1.   0</output></div>
    <div class="grp loc sp8"><button aria-label="右ロケーター"><svg><use href="#loc-r"/></svg></button><output>49. 1. 4. 17</output></div>
    <div class="grp sp4"><button class="on" aria-label="ロック"><svg><use href="#lock"/></svg></button><button aria-label="パンチイン"><svg><use href="#punchin"/></svg></button><button aria-label="パンチアウト"><svg><use href="#punchout"/></svg></button></div><span class="dots"></span>
    <div class="play"><button aria-label="サイクル"><svg><use href="#cycle"/></svg></button><button class="on" aria-label="停止"><svg><use href="#stop"/></svg></button><button aria-label="再生"><svg><use href="#play"/></svg></button><button aria-label="録音"><svg><use href="#rec"/></svg></button></div><span class="dots"></span>
    <div class="grp off"><button aria-label="モニター"><svg><use href="#sound"/></svg></button></div>
    <div class="grp loc sp4"><span class="pre"><svg><use href="#note"/></svg></span><output>13.  4.  3. 66</output></div><span class="dots"></span>
    <div class="grp bpm"><button class="on" aria-label="テンポ"><svg><use href="#tempo"/></svg></button><output>132.000</output><span class="updown">▲<br>▼</span></div><span class="dots"></span>
  </div>
  <div class="tgroup">
    <div class="grp"><button class="on" aria-label="メトロノーム"><svg><use href="#metro"/></svg></button><button aria-label="メトロノーム設定"><svg><use href="#e"/></svg></button></div><span class="dots"></span>
    <div class="grp activity"><i></i><i class="clip"></i></div><span class="dots"></span>
    <div class="grp slim"><button class="dark" aria-label="設定"><svg><use href="#gear"/></svg></button></div>
  </div>
</footer>

<footer class="taskbar">
  <div class="weather">
    <svg viewBox="0 0 20 20"><path d="M14 3q5 3 5 8t-5 7q-6 2-9-4 8 2 9-11z" fill="#f5a623"/><path d="M14 3q5 3 5 8t-5 7q5-7 0-15z" fill="#f7c948"/><path d="M3 9a3 3 0 0 1 1-5 4 4 0 0 1 7 1 2.500 2.500 0 0 1 0 4z" fill="#b4cdf5"/></svg>
    <div>21°C<br>晴れのちくもり</div>
  </div>
  <div class="apps">
    <button aria-label="スタート"><svg viewBox="0 0 20 20"><path d="M1 1h8.500v8.500H1zM10.500 1H19v8.500h-8.500zM1 10.500h8.500V19H1zM10.500 10.500H19V19h-8.500z" fill="#3cbdf7"/></svg></button>
    <button class="pillsearch"><svg class="i14"><use href="#search"/></svg>検索</button>
    <button aria-label="タスクビュー"><svg viewBox="0 0 20 20"><path d="M6 1h13v13H6z" fill="#eee"/><path d="M1 6h12v13H1z" fill="#777"/></svg></button>
    <button aria-label="チャット"><svg viewBox="0 0 20 20"><path d="M10 1a9 9 0 1 1-4 17l-4 1V13A9 9 0 0 1 10 1z" fill="#6264c7"/><path d="M5 7h7v7H5zM12.500 9.500L15 7.500v6l-2.500-2z" fill="#fff"/></svg></button>
    <button aria-label="エクスプローラー"><svg viewBox="0 0 20 20"><path d="M1 2h7l1 3h10v13H1z" fill="#ffcf3f"/><path d="M1 2h7l1 3H1z" fill="#d99a12"/><path d="M5 13h10q2 0 2 5H3q0-5 2-5z" fill="#1479c4"/></svg></button>
    <button class="run" aria-label="Edge"><svg viewBox="0 0 20 20"><circle cx="10" cy="10" r="9" fill="#1687c9"/><path d="M2 8a9 9 0 0 1 17 2c0 4-6 4-7 2 2-4-4-7-10-4z" fill="#47cf8b"/><path d="M8 9q-2 6 9 7-6 5-12 1-3-5 3-8z" fill="#0c4f9c"/><path d="M9 9q3 0 3 3 0 2 5 1-1 2-4 2-5-1-4-6z" fill="#33202f"/></svg></button>
    <button aria-label="ストア"><svg viewBox="0 0 20 20"><path d="M7 5V2h6v3" fill="none" stroke="#3ba0e0" stroke-width="1.500"/><rect x="1" y="4" width="18" height="15" rx="2" fill="#f5f5f5"/><path d="M6 7h3.500v3.500H6z" fill="#f25022"/><path d="M10.500 7H14v3.500h-3.500z" fill="#7fba00"/><path d="M6 11.500h3.500V15H6z" fill="#00a4ef"/><path d="M10.500 11.500H14V15h-3.500z" fill="#ffb900"/></svg></button>
    <button aria-label="アプリ"><svg viewBox="0 0 20 20"><circle cx="10" cy="10" r="9" fill="#0f5bea"/><path d="M7 4h7v9H7zM6 6v8h4l2 2" fill="none" stroke="#fff" stroke-width="1.400"/></svg></button>
    <button aria-label="アプリ"><svg viewBox="0 0 20 20"><circle cx="10" cy="10" r="9" fill="#ff9810"/><circle cx="10" cy="10" r="5.500" fill="#fff"/><path d="M7 9q1-2 3-1l3-1M7 12q2 2 4 0l3 0M13 7l-6 6" fill="none" stroke="#ff9810" stroke-width="1.500"/></svg></button>
    <button class="yahoo" aria-label="Yahoo">Y<em>!</em></button>
    <button class="run" aria-label="Spotify"><svg viewBox="0 0 20 20"><circle cx="10" cy="10" r="9" fill="#1ed760"/><path d="M4.500 7.500q6-2 11 1M5 10.500q5-1.500 9.500 1M5.500 13.500q4-1.500 8 .8" fill="none" stroke="#18261d" stroke-width="1.700"/></svg></button>
    <button class="current" aria-label="Cubase"><span class="logo"><svg class="i16"><use href="#cubase"/></svg></span></button>
  </div>
  <div class="tray">
    <svg viewBox="0 0 12 12"><path d="M2 8l4-4 4 4" class="st"/></svg>
    <svg viewBox="0 0 14 12" class="t14"><path d="M3 10a2.500 2.500 0 0 1 0-5 4 4 0 0 1 7-1 3 3 0 0 1 1 6z" fill="#eee"/></svg>
    <svg viewBox="0 0 14 14" class="t14"><path d="M1 5a6 6 0 0 1 10-3l1 2M12 1v3H9M2 13v-3h3" class="st"/><circle cx="10" cy="10" r="3.500" fill="#0a84e0"/></svg>
    <span class="ime">あ</span>
    <svg viewBox="0 0 14 14" class="t14"><path d="M8 2H1v8h10V8M4 13h5M10 1h3v4h-3zM11.500 5v4" class="st"/></svg>
    <svg viewBox="0 0 14 14" class="t14"><path d="M1 5h2l3-3v10L3 9H1zM8 5q2 2 0 4M10 3q3 4 0 8M12 2q3 5 0 10" class="st"/></svg>
    <time>18:10<br>2022/10/15</time>
    <span class="badge">16</span>
  </div>
</footer>
<script src="app.js"></script>
</body>
</html>
```
FILE: styles.css
```css
* { box-sizing: border-box; }
:root {
  --bg: #25292c;
  --btn: #5c5e61;
  --edge: #6f7174;
  --dark: #191b1e;
  --red: #e53735;
  --slate: #93a0ae;
  --ui: "Open Sans", "Noto Sans CJK JP", sans-serif;
  --small: "Liberation Sans", "Noto Sans CJK JP", sans-serif;
  --value: Roboto, "Noto Sans CJK JP", sans-serif;
}
body {
  margin: 0;
  height: 100vh;
  display: flex;
  flex-direction: column;
  overflow: hidden;
  background: #070708;
  color: #e6e6e6;
  font: 9px/12px var(--ui);
  font-feature-settings: "palt";
  white-space: nowrap;
}
button, select, output { font: inherit; font-feature-settings: inherit; color: inherit; }
button { border: 0; padding: 0; margin: 0; background: none; display: flex; align-items: center; justify-content: center; }
h1, h2 { margin: 0; font-size: inherit; font-weight: inherit; }
svg { display: block; width: 12px; height: 12px; flex: none; }
i { font-style: normal; }
.sprite { position: absolute; width: 0; height: 0; }
.i10 { width: 10px; height: 10px; }
.i14 { width: 14px; height: 14px; }
.i16 { width: 16px; height: 16px; }

/* menu bar */
.menubar { flex: none; height: 19px; display: flex; align-items: center; background: #fff; color: #222; border-bottom: 1px solid #8d8f91; padding: 0 5px; }
.logo { display: grid; place-items: center; width: 16px; height: 16px; background: #17608a; }
.menus { display: flex; gap: 8px; margin-left: 11px; }
.title { flex: 1; text-align: center; padding-left: 36px; }
.winbtns { display: flex; gap: 24px; padding-right: 9px; }
.winbtns path { fill: none; stroke: #222; stroke-width: 1; }

/* toolbar */
.topbar { flex: none; height: 55px; padding: 5px 2px 0 7px; background: var(--bg); }
.tools { display: flex; height: 20px; }
.tools-mid { display: flex; gap: 4px; margin-left: 152px; }
.tools-end { display: flex; gap: 4px; margin-left: auto; }
.grp { display: flex; height: 20px; background: var(--btn); border: 1px solid var(--edge); border-radius: 2px; overflow: hidden; }
.grp svg { width: 14px; height: 14px; }
.grp svg.i16 { width: 16px; height: 16px; }
.grp button { width: 20px; flex: none; height: 100%; font-size: 7px; }
.grp button:first-child, .grp button:last-child { width: 19px; }
.grp button:only-child { width: 18px; }
.grp button.on { background: #f4f4f4; color: #111; }
.grp button.dark { background: var(--dark); }
.grp .pre { width: 20px; display: grid; place-items: center; background: var(--dark); }
.letters button { font-weight: 700; font-size: 11px; }
.letters .dim { color: #8b8d8f; }
.palette .grip, .palette .grip:first-child { width: 10px; background: #f39b3c; color: #111; font-weight: 700; font-size: 11px; }
.grp.slim { width: 16px; }
.grp.slim button { width: 14px; }
.grp.slim svg { width: 12px; height: 12px; }
.w36.grp { width: 36px; }
.w36.grp button { width: 34px; gap: 4px; }
.gap-l { margin-left: 4px; }
.sel { position: relative; display: block; flex: none; background: var(--dark); }
.sel::after { content: "▼"; position: absolute; right: 6px; top: 3px; font-size: 7px; pointer-events: none; }
.sel select { appearance: none; width: 100%; height: 100%; border: 0; padding: 0 5px; background: transparent; font-size: 10px; outline: 0; }
.w80 { width: 80px; }
.w88 { width: 89px; }
.w100 { width: 100px; }
.hashed select { padding: 0 0 0 1px; }
.status { display: flex; height: 16px; margin-top: 6px; }
.chips { flex: 1; display: flex; justify-content: center; gap: 6px; font-size: 8px; }
.chip { display: flex; align-items: center; justify-content: space-between; padding: 0 4px; background: #404448; border-radius: 2px; line-height: 16px; }
.chip b { font-weight: 600; color: #fff; }
.chip .warn { color: #e48a3a; }
.c100 { width: 100px; }
.c120 { width: 120px; }
.c128 { width: 128px; }
.c136 { width: 136px; }
.status .grp { height: 17px; }
.infoline { flex: none; height: 31px; line-height: 33px; text-align: center; background: #191a1c; padding-left: 4px; }

/* zones */
.zones { flex: 1; min-height: 0; display: grid; grid-template-columns: 137px minmax(0, 1fr) 183px; gap: 4px; padding: 5px 4px 3px; }
.panel { display: flex; flex-direction: column; min-height: 0; }
.tabs { display: flex; height: 19px; flex: none; }
.tab { padding: 0 8px 2px; font-weight: 600; color: #ddd; }
.tab.active { background: var(--bg); border: 2px solid #55585b; border-bottom: 0; border-radius: 4px 4px 0 0; position: relative; z-index: 1; color: #fff; }
.tab.end { margin-left: auto; padding: 0 4px; }
.inspector .tabs:not(.foot) .active { padding: 0 8px 3px 7px; }
.panel-body { flex: 1; min-height: 0; background: var(--bg); border: 2px solid #55585b; border-radius: 0 4px 4px 0; margin: -2px 0; display: flex; flex-direction: column; padding: 6px 4px; }
.foot { height: 17px; }
.foot .tab { font-weight: 400; padding: 2px 14px 0; }
.foot .tab.active { border: 2px solid #55585b; border-top: 0; border-radius: 0 0 4px 4px; }

.bar { display: flex; height: 19px; flex: none; background: var(--btn); border: 1px solid var(--edge); border-radius: 2px; overflow: hidden; }
.bar button { width: 18px; flex: none; }
.bar .tri { font-size: 8px; }
.bar button:last-child { border-left: 1px solid #3d3f41; }
.bar .sec { flex: 1; justify-content: flex-start; gap: 4px; padding-left: 5px; font-size: 9px; }
.bar .sec i { font-size: 7px; }
.bar .blue { background: #79b2f5; color: #12202f; }
.name { flex: 1; display: flex; align-items: center; justify-content: space-between; padding: 0 2px 0 4px; font-size: 8px; }
.name.right { justify-content: flex-end; gap: 3px; }
.name.right svg { width: 10px; color: #5d0d0d; }
.red { background: var(--red); color: #fff; }
.strip { position: relative; display: grid; grid-template-columns: 37px 78px; gap: 2px; margin: 6px 3px 0; padding: 2px 1px; height: 41px; align-content: start; color: #10151a; font: 700 9px/12px var(--small); }
.strip-bg { position: absolute; inset: 0; width: 100%; height: 40px; }
.cell { position: relative; display: flex; height: 13px; background: #b7cce0; border: 1px solid #8095ac; border-radius: 2px; }
.cell button { flex: 1; }
.cell svg { width: 11px; height: 11px; }
.cell svg.wide { width: 14px; }
.cell .amber { background: #e8b567; }
.rounds { position: relative; display: flex; gap: 1px; margin: -1px 0 0 -1px; height: 20px; }
.recbtn { width: 20px; height: 20px; border-radius: 50%; background: radial-gradient(circle, #0b0505 0 4px, #e0474b 5px); border: 1px solid #8b2c35; }
.monbtn { width: 15px; height: 15px; border-radius: 50%; background: #bccfe2; border: 1px solid #5d7186; }
.monbtn svg { width: 10px; height: 10px; }
.levels { display: grid; grid-template-columns: 38px 1fr; margin: 0 3px; height: 53px; }
.lv-icons { display: flex; flex-direction: column; gap: 6px; padding: 3px 6px 0 0; align-items: flex-end; color: #7b93aa; }
.lv-icons .wide { width: 16px; }
.lv-box { background: #000; border: 1px solid #34383b; display: grid; grid-template-rows: repeat(3, 1fr); font: 700 8px/10px var(--small); }
.lv { position: relative; text-align: right; padding-top: 3px; }
.lv.mid { text-align: center; color: #3f5266; }
.rail { position: absolute; left: 1px; right: 1px; bottom: 0; height: 1px; background: #24394a; }
.rail i { position: absolute; left: 48%; top: -2px; width: 5px; height: 5px; background: #bdf0ff; }
.rail.full { background: linear-gradient(90deg, #35b7c9 76%, #24394a 0); }
.rail.full i { left: 76%; }
.rows { margin: 8px 3px 0; display: flex; flex-direction: column; gap: 1px; font: 8px/12px var(--value); }
.rows + .rows { margin-top: 5px; }
.row { display: flex; align-items: center; gap: 5px; height: 13px; padding: 0 2px; background: #000; color: #eee; }
.row svg { width: 9px; height: 9px; color: #4c6a78; }
.row > :nth-child(2) { flex: 1; }
.row .lit { color: #9ec3d0; }
.row .prog { text-align: right; }
.dimrow { color: #607789; font-size: 7px; }
.notch { padding-left: 40px; background: linear-gradient(52deg, var(--bg) 33px, #000 34px); height: 14px; }
.notch > :nth-child(2) { text-align: center; }
.keybtn { display: flex; align-items: center; background: #1e2d36; color: #a8c5d0; }
.keybtn svg { color: #a8c5d0; }
.retro { display: flex; justify-content: space-between; height: 18px; margin: 5px 3px 0; padding: 0 2px 0 3px; background: #000; color: #5c7389; font: 7px/18px var(--value); }
.transformer { display: flex; justify-content: space-between; align-items: center; margin: 2px 3px 0; padding-left: 3px; font-size: 7px; height: 16px; }
.sel.small { width: 31px; height: 16px; border: 1px solid var(--edge); border-radius: 2px; }
.sel.small select { font-size: 8px; padding: 0 3px; }
.sel.small::after { right: 3px; top: 1px; font-size: 6px; }
.sections { display: flex; flex-direction: column; gap: 7px; margin-top: 10px; }
.gearbtn { width: 20px; height: 16px; margin-top: 7px; background: var(--dark); border: 1px solid var(--edge); border-radius: 2px; }

/* project window */
.project { background: var(--bg); border: 2px solid #f4f4f4; border-radius: 6px; padding: 0 0 0 3px; display: grid; grid-template-columns: 288px minmax(0, 1fr) 12px; grid-template-rows: 22px minmax(0, 1fr) 11px; min-height: 0; overflow: hidden; }
.list-head { display: flex; align-items: center; gap: 8px; padding: 0 2px 2px 0; }
.grp.low { height: 17px; }
.grp.low svg { width: 13px; height: 13px; }
.grp.count { margin-left: auto; }
.count span { width: 51px; padding-left: 3px; line-height: 15px; background: #404448; }
.ruler { width: calc(100% - 3px); height: 20px; margin: 2px 0 0 3px; background: #b9c3d0; }
.ruler text { font: 600 10px var(--ui); fill: #17202a; }
.ruler-menu { width: 11px; height: 18px; margin-top: 2px; background: var(--btn); border: 1px solid var(--edge); border-radius: 2px; font-size: 7px; }
.tracks { display: flex; flex-direction: column; background: var(--bg); }
.track { display: grid; grid-template-columns: 32px 1fr 9px; height: 65px; border-bottom: 1px solid #6d7174; }
.track.tall { height: 66px; }
.track.folder { height: 16px; border-top: 1px solid #6d7174; }
.tcol { background: var(--slate); color: #fff; display: flex; justify-content: space-between; padding: 2px; }
.folder .tcol { padding: 0 2px; }
.tcol span { color: #4b5865; font: 8px/12px var(--small); }
.tmain { display: flex; gap: 4px; padding: 2px 0 0 6px; overflow: hidden; }
.folder .tmain { padding: 0 0 0 9px; }
.tmeter { background: #000; }
.track h2 { font: 600 9px/14px var(--ui); }
.pair { display: flex; width: 34px; height: 13px; gap: 1px; }
.pair button { flex: none; width: 17px; background: #505356; border-radius: 2px; color: #0c0d0e; font: 700 9px/12px var(--small); }
.pair svg { width: 11px; height: 11px; }
.pair .peach { background: #e99560; }
.thumb { width: 28px; height: 28px; margin-top: 12px; border: 1px solid #1a1d1f; border-radius: 3px; }
.tinfo { display: flex; flex-direction: column; gap: 2px; }
.ctl, .tempo { display: flex; gap: 3px; }
.pill { display: flex; align-items: center; height: 12px; background: #4a4d50; border: 1px solid #5a5d60; border-radius: 2px; color: #0a0b0c; font: 700 8px/10px var(--small); }
.pill button { width: 18px; height: 100%; }
.pill button:only-child { width: 15px; }
.pill svg { width: 10px; height: 10px; }
.pill svg.wide { width: 14px; height: 12px; }
.pill.teal { background: #35a3b4; }
.pill.violet { background: #7a7ccf; }
.pill.txt { padding: 0 3px 0 2px; font-weight: 400; font-size: 7px; }
.tempo { margin-left: auto; padding-top: 1px; }
.pill.val { width: 41px; justify-content: center; }
.pill.step { width: 38px; justify-content: flex-end; font-weight: 400; }
.selected .tmain { background: #e8e8e8; color: #16181a; }
.selected h2 { font-weight: 400; }
.selected .tcol { background: var(--red); }
.selected .tcol span { color: #8c2020; }
.selected .pill, .selected .pair button { background: #f2f2f2; }
.selected .pill, .selected .pair { border: 1px solid #8a8c8e; border-radius: 2px; }
.selected .pair button { width: 16px; height: 11px; }
.selected .pill .armed { background: #c9484d; }
.selected .thumb { border: 2px solid #c2c2c2; }
.canvas { border-left: 2px solid #75787a; margin-left: 1px; background: #234766; overflow: hidden; min-width: 0; }
.canvas svg { width: 100%; height: 100%; }
.canvas text { font: 600 9px var(--ui); fill: #15191d; }
.vside { display: flex; flex-direction: column; align-items: center; padding: 3px 2px 0 0; color: #9a9c9e; font: 8px/10px var(--small); }
.vslider { position: relative; width: 1px; height: 38px; margin: 4px 0 7px; background: #8f9193; }
.vslider i { position: absolute; left: -2px; bottom: 0; width: 5px; height: 5px; border-radius: 50%; background: #ccc; }
.vslider.short { height: 42px; margin: 3px 0 0; }
.vslider.short i { bottom: 34px; }
.vscroll { flex: 1; width: 10px; display: flex; flex-direction: column; justify-content: space-between; align-items: center; background: #45474a; border-radius: 2px; }
.list-foot { display: flex; align-items: flex-end; gap: 7px; padding: 0 5px 0 6px; color: #7d8083; font-size: 7px; line-height: 11px; }
.list-foot .grow { flex: 1; }
.list-foot span:first-child { color: #ddd; font-size: 9px; }
.hscroll { margin-left: 3px; display: flex; align-items: center; gap: 5px; padding-right: 10px; color: #9a9c9e; font-size: 7px; line-height: 9px; }
.track-h { flex: 1; display: flex; align-items: center; gap: 14px; height: 9px; padding: 0 4px; background: #45474a; font-size: 12px; color: #fff; }
.track-h i { width: 22px; height: 6px; background: #eee; border-radius: 1px; }
.track-h .r { margin-left: auto; }
.hslider { position: relative; width: 38px; height: 1px; background: #8f9193; }
.hslider i { position: absolute; left: 17px; top: -2px; width: 5px; height: 5px; border-radius: 50%; background: #ccc; }

/* meter rack */
.rack .tabs:not(.foot) { justify-content: space-between; padding-left: 4px; }
.rack .tabs:not(.foot) .active { width: 50px; padding: 0 0 3px; }
.rack .panel-body { border-radius: 4px; padding: 6px 5px; }
.bar.master { align-items: center; padding-right: 7px; }
.bar.master .sec { gap: 1px; padding-left: 4px; }
.bar .crbtn { width: 31px; height: 12px; background: #73869a; border: 1px solid #2b3036; border-radius: 2px; font: 700 8px/9px var(--small); color: #1b222a; }
.scale-row { display: grid; grid-template-columns: 1fr 1fr; margin: 16px 4px 0 0; height: 15px; text-align: center; background: #000; font: 8px/15px var(--value); color: #5b7086; }
.scale-row b { color: #f2f2f2; }
.two { display: grid; grid-template-columns: 1fr 1fr; gap: 3px; margin: 3px 4px 0 0; }
.two button { height: 13px; background: #8e9092; border: 1px solid #5a5c5e; border-radius: 2px; color: #101214; }
.two svg { width: 10px; height: 10px; }
.meter { width: 170px; height: 500px; margin-top: 10px; }
.meter text { font: 11px "Liberation Sans", sans-serif; fill: #c0c2c4; }
.peaks { display: grid; grid-template-columns: repeat(2, 68px); justify-content: center; height: 39px; padding: 5px 0 0; margin-top: 11px; border: 2px solid #1a1c1e; border-radius: 4px; text-align: center; }
.peaks b { display: block; font: 600 9px/13px var(--ui); }

/* transport */
.transport { flex: none; height: 33px; display: flex; justify-content: space-between; background: var(--bg); padding: 0 3px; }
.tgroup { display: flex; align-items: center; }
.tgroup.center { margin-left: 228px; margin-right: auto; }
.sp4 { margin-left: 4px; }
.sp8 { margin-left: 8px; }
.dots { width: 9px; height: 11px; background: repeating-linear-gradient(#9a9c9e 0 2px, transparent 2px 4px) center / 2px 11px no-repeat; }
.aq.grp { width: 31px; }
.aq.grp button { width: 29px; font-size: 10px; }
.loc.grp { width: 120px; }
.loc output { flex: 1; background: var(--dark); text-align: right; padding-right: 3px; font: 11px/18px var(--ui); white-space: pre; }
.play { display: grid; grid-template-columns: repeat(4, 39px); height: 26px; border: 2px solid #b8babc; border-radius: 3px; background: #77797b; }
.play svg { width: 13px; height: 13px; }
.play .on { background: #e6edf5; color: #15181b; }
.off button { color: #8a8c8e; }
.off.grp { width: 30px; }
.off.grp button { width: 28px; }
.bpm { background: var(--dark); }
.bpm output { width: 48px; text-align: center; font: 10px/18px var(--ui); }
.updown { width: 16px; text-align: center; font-size: 6px; line-height: 9px; }
.activity { width: 71px; background: var(--dark); justify-content: space-between; padding: 1px 2px 1px 20px; }
.activity i { width: 1px; background: #4b4d50; }
.activity .clip { width: 3px; background: #f01010; }

/* Windows taskbar */
.taskbar { flex: none; height: 38px; display: grid; grid-template-columns: 1fr auto 1fr; align-items: center; background: linear-gradient(90deg, #501729 0, #431f28 18%, #43211f 36%, #3a1f3e 52%, #341d44 72%, #25204a 100%); padding: 0 15px; font-size: 9px; color: #fff; }
.weather { display: flex; align-items: center; gap: 5px; line-height: 12px; }
.weather svg { width: 20px; height: 20px; }
.apps { display: flex; align-items: center; gap: 1px; }
.apps button { position: relative; width: 34px; height: 32px; border-radius: 4px; }
.apps button > svg:not(.i14) { width: 20px; height: 20px; }
.apps .pillsearch { width: 80px; height: 26px; border-radius: 13px; background: #553534; gap: 3px; margin: 0 3px; }
.apps .run::after, .apps .current::after { content: ""; position: absolute; bottom: 0; width: 5px; height: 2px; border-radius: 1px; background: #a9a0ac; }
.apps .current { background: #493353; }
.apps .current::after { width: 12px; background: #4cc2ff; }
.apps .logo { width: 19px; height: 19px; }
.apps .yahoo { color: #f01414; font: 700 15px "Liberation Serif", serif; }
.tray { justify-self: end; display: flex; align-items: center; gap: 5px; }
.t14 { width: 14px; height: 14px; }
.tray .st { fill: none; stroke: #eee; }
.ime { font-size: 12px; padding: 0 4px; }
.tray time { text-align: right; padding-left: 8px; }
.badge { display: grid; place-items: center; width: 15px; height: 15px; border-radius: 50%; background: #4cc2ff; color: #12202a; font-size: 8px; }
```
FILE: app.js
```js
const NS = "http://www.w3.org/2000/svg";
function add(parent, tag, attrs, text) {
  const el = document.createElementNS(NS, tag);
  for (const k in attrs) el.setAttribute(k, attrs[k]);
  if (text !== undefined) el.textContent = text;
  parent.appendChild(el);
  return el;
}

const BAR_X = 89, BAR_W = 147.4, FIRST_BAR = 5;
const beatX = n => Math.round(BAR_X + n * BAR_W / 4);

// Ruler
const ruler = document.getElementById("ruler");
const width = ruler.clientWidth;
for (let n = -2; beatX(n) < width; n++) {
  const bar = n % 4 === 0, x = beatX(n);
  add(ruler, "rect", { x, y: bar ? 0 : 10, width: 1, height: 20, fill: bar ? "#2d3a48" : "#5a6877" });
  if (bar) add(ruler, "text", { x: x + 3, y: 17 }, FIRST_BAR + n / 4);
}

// Arrangement background and grid
const view = document.getElementById("arrange");
add(view, "rect", { x: 0, y: 69, width: "100%", height: 13, fill: "#355876" });
for (const y of [16, 147, 212]) add(view, "rect", { x: 0, y, width: "100%", height: 1, fill: "#315472" });
for (let n = -2; beatX(n) < width; n++)
  add(view, "rect", { x: beatX(n), y: 0, width: 1, height: "100%", fill: n % 4 ? "#4b6a86" : "#75899c" });
add(view, "rect", { x: 0, y: 107, width: "100%", height: 1, fill: "#8396a6" });

// Audio event
add(view, "rect", { x: 0, y: 214, width: "100%", height: 64, fill: "#93a0ae" });
for (let n = -2; beatX(n) < width; n++)
  add(view, "rect", { x: beatX(n), y: 216, width: 1, height: 60, fill: "#7b8d9f" });
let seed = 7;
const rnd = () => (seed = (seed * 16807) % 2147483647) / 2147483647;
const soft = new Set([2, 5, 7, 10, 13, 15, 20]);
const quiet = [[17, 13], [44, 7], [54, 9], [72, 7]];
function levels(x) {
  if (x < 88) {
    let a = 1.500 + rnd();
    for (const [px, h] of quiet) if (x >= px && x < px + 10) a += h * Math.exp(-(x - px) / 2);
    if (x > 82) a += (x - 82) * 0.8;
    return [a, a];
  }
  const n = Math.floor((x - BAR_X + 1) * 4 / BAR_W), d = Math.max(0, x - beatX(n));
  const hit = soft.has(n) ? 5 : 11;
  const swell = Math.sin(x / 11);
  const busy = d < 18 ? 7 : 4;
  return [
    4 + swell + hit * Math.exp(-d / 3) + busy * rnd() * rnd(),
    3 + swell + hit * 1.400 * Math.exp(-d / 3) + (d < 24 ? 5 : 2) * rnd() * rnd()
  ];
}
for (const mid of [230, 260]) {
  const top = [], low = [];
  for (let x = 0; x <= width; x++) {
    const [up, down] = levels(x);
    top.push(`${x} ${(mid - Math.min(14, up)).toFixed(1)}`);
    low.unshift(`${x} ${(mid + Math.min(15, down)).toFixed(1)}`);
  }
  add(view, "path", { d: `M${top.join("L")}L${low.join("L")}z`, fill: "#51606d", stroke: "#1d2429", "stroke-width": 1 });
}
add(view, "rect", { x: 0, y: 214, width: "100%", height: 1, fill: "#bdd0df" });
add(view, "rect", { x: 0, y: 275, width: "100%", height: 1, fill: "#bdd0df" });
add(view, "rect", { x: 0, y: 277, width: "100%", height: 2, fill: "#32516d" });
add(view, "text", { x: 1, y: 226 }, "VES");

// MIDI event
add(view, "rect", { x: 0, y: 279, width: "100%", height: 64, fill: "#e53735" });
add(view, "rect", { x: 0, y: 279, width: "100%", height: 1, fill: "#8a2430" });
add(view, "rect", { x: 0, y: 342, width: "100%", height: 1, fill: "#a31f22" });
for (let n = -2; beatX(n) < width; n++)
  add(view, "rect", { x: beatX(n), y: 281, width: 1, height: 60, fill: "#c92a2b" });
const notes = {
  284: [[583, 11]],
  292: [[86, 88], [239, 10], [567, 15], [605, 60], [682, 86], [826, 12]],
  305: [[185, 9], [201, 14], [257, 6], [271, 8], [767, 9], [788, 9], [844, 5], [860, 7]],
  314: [[217, 12], [288, 10], [306, 53], [456, 13], [513, 24], [547, 12], [806, 11], [876, 11]],
  323: [[380, 21], [419, 11], [435, 14], [474, 9], [494, 11], [512, 4]]
};
for (const y in notes) for (const [x, w] of notes[y]) {
  const tall = 8 + (x * 7) % 32;
  add(view, "rect", { x, y: 341 - tall, width: 1, height: tall, fill: "#c4282a" });
  add(view, "rect", { x, y, width: w, height: 6, fill: "#861010" });
}

// Level meter scale
const meter = document.getElementById("meter");
add(meter, "rect", { x: 49, y: 8, width: 72, height: 487, fill: "#000", stroke: "#4c4e50", "stroke-width": 2 });
const marks = [[0, 9], [5, 68], [10, 127], [15, 186], [20, 245], [25, 295], [30, 339], [35, 378], [40, 411], [50, 459], [60, 478]];
marks.forEach(([db, y], i) => {
  add(meter, "text", { x: 35, y: y + 4, "text-anchor": "end" }, db);
  add(meter, "text", { x: 134, y: y + 4 }, db);
  for (const x of [40, 123]) add(meter, "rect", { x, y, width: 6, height: 1, fill: "#c5c7c9" });
  const next = marks[i + 1];
  if (!next) return;
  const steps = db < 40 ? 5 : 2;
  for (let k = 1; k < steps; k++) {
    const ty = Math.round(y + (next[1] - y) * k / steps);
    for (const x of [43, 123]) add(meter, "rect", { x, y: ty, width: 3, height: 1, fill: "#a5a7a9" });
  }
});
```
